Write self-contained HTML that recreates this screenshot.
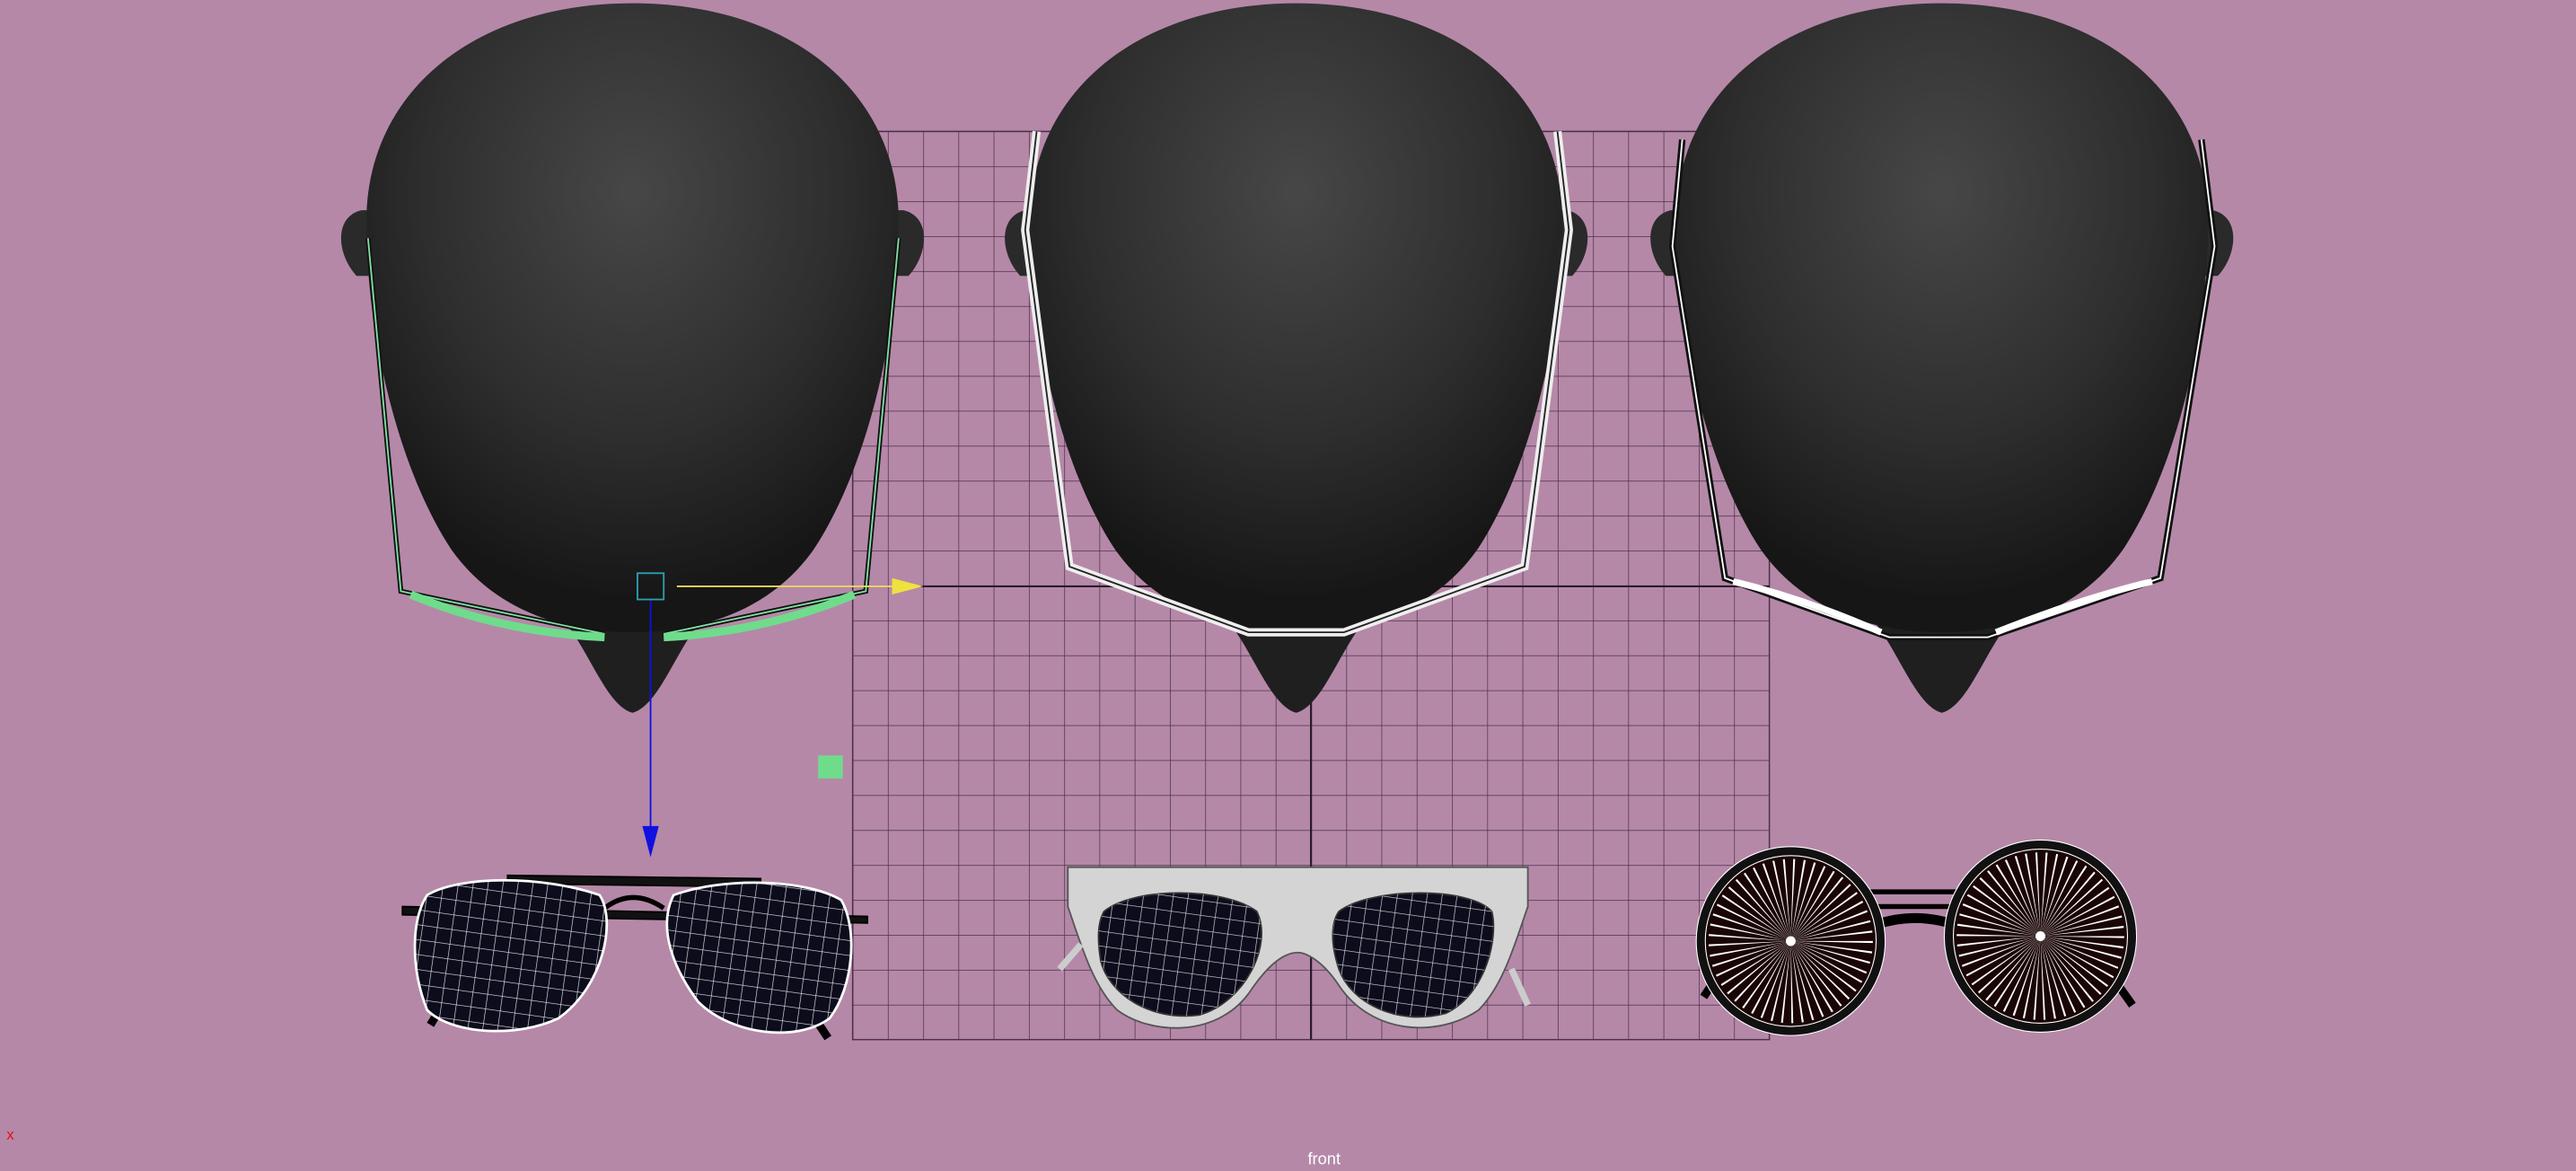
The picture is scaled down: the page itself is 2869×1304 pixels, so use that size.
<!DOCTYPE html>
<html><head><meta charset="utf-8"><style>
html,body{margin:0;padding:0;background:#b588a8;overflow:hidden}
svg{display:block}
</style></head><body>
<svg width="2869" height="1304" viewBox="0 0 1568 713" preserveAspectRatio="none" xmlns="http://www.w3.org/2000/svg">
<defs>
<radialGradient id="hg" cx="0.5" cy="0.3" r="0.65">
<stop offset="0" stop-color="#474747"/><stop offset="0.6" stop-color="#2e2e2e"/><stop offset="1" stop-color="#161616"/>
</radialGradient>
<pattern id="grid" x="519" y="80" width="21.46" height="21.27" patternUnits="userSpaceOnUse">
<path d="M0 0H21.46M0 0V21.27" stroke="#4b3148" stroke-width="0.8" fill="none"/>
</pattern>
<pattern id="lg" width="9" height="9" patternUnits="userSpaceOnUse" patternTransform="rotate(8)">
<path d="M0 0H9M0 0V9" stroke="#fff" stroke-width="0.7" fill="none"/>
</pattern>
<symbol id="head" viewBox="-200 0 400 440" overflow="visible">
<path d="M-165 128 C-182 132 -180 155 -168 168 L-158 168 L-158 128Z" fill="#2a2a2a"/>
<path d="M165 128 C182 132 180 155 168 168 L158 168 L158 128Z" fill="#2a2a2a"/>
<path d="M-40 380 C-25 400 -15 430 0 434 C15 430 25 400 40 380Z" fill="#1f1f1f"/>
<path d="M0 2 C95 2 162 55 162 135 C162 210 140 290 110 335 C85 370 45 385 0 385 C-45 385 -85 370 -110 335 C-140 290 -162 210 -162 135 C-162 55 -95 2 0 2Z" fill="url(#hg)"/>
</symbol>
</defs>
<rect width="1568" height="713" fill="#b588a8"/>
<rect x="519" y="80" width="558" height="553" fill="url(#grid)"/>
<rect x="519" y="80" width="558" height="553" fill="none" stroke="#4b3148" stroke-width="0.8"/>
<line x1="798" y1="80" x2="798" y2="633" stroke="#2a1a28" stroke-width="1.2"/>
<line x1="545" y1="357" x2="1077" y2="357" stroke="#2a1a28" stroke-width="1.2"/>

<use href="#head" x="185" y="0" width="400" height="440"/>
<use href="#head" x="589" y="0" width="400" height="440"/>
<use href="#head" x="982" y="0" width="400" height="440"/>

<g fill="none" stroke="#111" stroke-width="3">
<path d="M224 145 L244 360 L368 386 M547 145 L527 360 L404 386"/>
</g>
<g fill="none" stroke="#7fe0a0" stroke-width="1">
<path d="M224 145 L244 360 L368 386 M547 145 L527 360 L404 386"/>
</g>
<path d="M250 362 Q305 385 368 388 M520 362 Q465 385 404 388" stroke="#6fdc8c" stroke-width="5" fill="none"/>

<g fill="none" stroke="#eee" stroke-width="5">
<path d="M631 80 L624 140 L651 345 L760 385 L818 385 L928 345 L955 140 L948 80"/>
</g>
<g fill="none" stroke="#222" stroke-width="1">
<path d="M631 80 L624 140 L651 345 L760 385 L818 385 L928 345 L955 140 L948 80"/>
</g>
<g fill="none" stroke="#111" stroke-width="4">
<path d="M1024 85 L1018 150 L1050 352 L1150 388 L1210 388 L1315 352 L1348 150 L1340 85"/>
</g>
<g fill="none" stroke="#fff" stroke-width="1">
<path d="M1024 85 L1018 150 L1050 352 L1150 388 L1210 388 L1315 352 L1348 150 L1340 85"/>
</g>
<path d="M1055 354 Q1100 365 1145 385 M1310 354 Q1265 365 1215 385" stroke="#fff" stroke-width="4" fill="none"/>

<line x1="396" y1="365" x2="396" y2="505" stroke="#1010e0" stroke-width="1"/>
<path d="M391 503 L401 503 L396 522Z" fill="#1010e0"/>
<line x1="412" y1="357" x2="545" y2="357" stroke="#e8d860" stroke-width="1"/>
<path d="M543 352 L543 362 L562 357Z" fill="#f0e040"/>
<rect x="388" y="349" width="16" height="16" fill="none" stroke="#2aa0b0" stroke-width="1"/>
<rect x="498" y="460" width="15" height="14" fill="#6fdc8c"/>

<g stroke="#000">
<path d="M309 533 L463 535 L463 540 L309 538Z" fill="#111" stroke-width="1"/>
<path d="M245 552 L528 558 L528 562 L245 557Z" fill="#111" stroke-width="1"/>
<path d="M368 553 Q385 540 404 553" fill="none" stroke-width="3"/>
<path d="M268 614 L262 624 M496 620 L504 632" stroke-width="5"/>
</g>
<path d="M260 545 C280 533 330 533 365 545 C375 560 368 600 340 620 C315 632 275 630 260 615 C250 590 250 560 260 545Z" fill="#0d0c1c" stroke="#fff" stroke-width="1.5"/>
<path d="M260 545 C280 533 330 533 365 545 C375 560 368 600 340 620 C315 632 275 630 260 615 C250 590 250 560 260 545Z" fill="url(#lg)" opacity="0.9"/>
<path d="M410 545 C440 534 490 535 512 548 C522 565 520 600 505 620 C485 635 445 630 425 610 C410 590 400 565 410 545Z" fill="#0d0c1c" stroke="#fff" stroke-width="1.5"/>
<path d="M410 545 C440 534 490 535 512 548 C522 565 520 600 505 620 C485 635 445 630 425 610 C410 590 400 565 410 545Z" fill="url(#lg)" opacity="0.9"/>

<path d="M650 528 L930 528 L930 552 C922 575 915 600 900 615 C875 632 835 630 815 600 C805 585 795 580 790 580 C780 580 770 590 760 605 C740 632 700 630 680 615 C665 600 658 575 650 552Z" fill="#d4d4d4" stroke="#555" stroke-width="1"/>
<path d="M658 575 L645 590 M920 590 L930 612" stroke="#ccc" stroke-width="4"/>
<path d="M672 555 C690 540 745 540 765 555 C775 575 758 610 730 618 C700 622 675 605 670 585 C668 572 668 562 672 555Z" fill="#0d0c1c" stroke="#333"/>
<path d="M672 555 C690 540 745 540 765 555 C775 575 758 610 730 618 C700 622 675 605 670 585 C668 572 668 562 672 555Z" fill="url(#lg)" opacity="0.85"/>
<path d="M815 555 C835 540 895 540 908 555 C912 570 905 605 880 617 C850 625 822 610 815 590 C810 575 810 562 815 555Z" fill="#0d0c1c" stroke="#333"/>
<path d="M815 555 C835 540 895 540 908 555 C912 570 905 605 880 617 C850 625 822 610 815 590 C810 575 810 562 815 555Z" fill="url(#lg)" opacity="0.85"/>

<g stroke="#000">
<path d="M1138 543 L1192 543 M1138 552 L1192 552" stroke-width="3"/>
<path d="M1142 563 Q1165 555 1190 563" fill="none" stroke-width="6"/>
<path d="M1045 595 L1037 607 M1288 598 L1298 612" stroke-width="5"/>
</g>
<circle cx="1090" cy="573" r="55" fill="#1a0505" stroke="#111" stroke-width="5"/>
<circle cx="1090" cy="573" r="52" fill="none" stroke="#fff" stroke-width="0.6"/>
<circle cx="1090" cy="573" r="25" fill="none" stroke="#fff" stroke-width="50" stroke-dasharray="0.6 2.6"/>
<circle cx="1090" cy="573" r="57.5" fill="none" stroke="#fff" stroke-width="0.6"/>
<circle cx="1090" cy="573" r="3" fill="#fff"/>
<circle cx="1242" cy="570" r="56" fill="#1a0505" stroke="#111" stroke-width="5"/>
<circle cx="1242" cy="570" r="53" fill="none" stroke="#fff" stroke-width="0.6"/>
<circle cx="1242" cy="570" r="25.5" fill="none" stroke="#fff" stroke-width="51" stroke-dasharray="0.6 2.6"/>
<circle cx="1242" cy="570" r="58.5" fill="none" stroke="#fff" stroke-width="0.6"/>
<circle cx="1242" cy="570" r="3" fill="#fff"/>

<text x="806" y="709" fill="#fff" font-family="Liberation Sans, sans-serif" font-size="10" text-anchor="middle">front</text>
<text x="4" y="694" fill="#e01010" font-family="Liberation Sans, sans-serif" font-size="9">x</text>
</svg>
</body></html>
